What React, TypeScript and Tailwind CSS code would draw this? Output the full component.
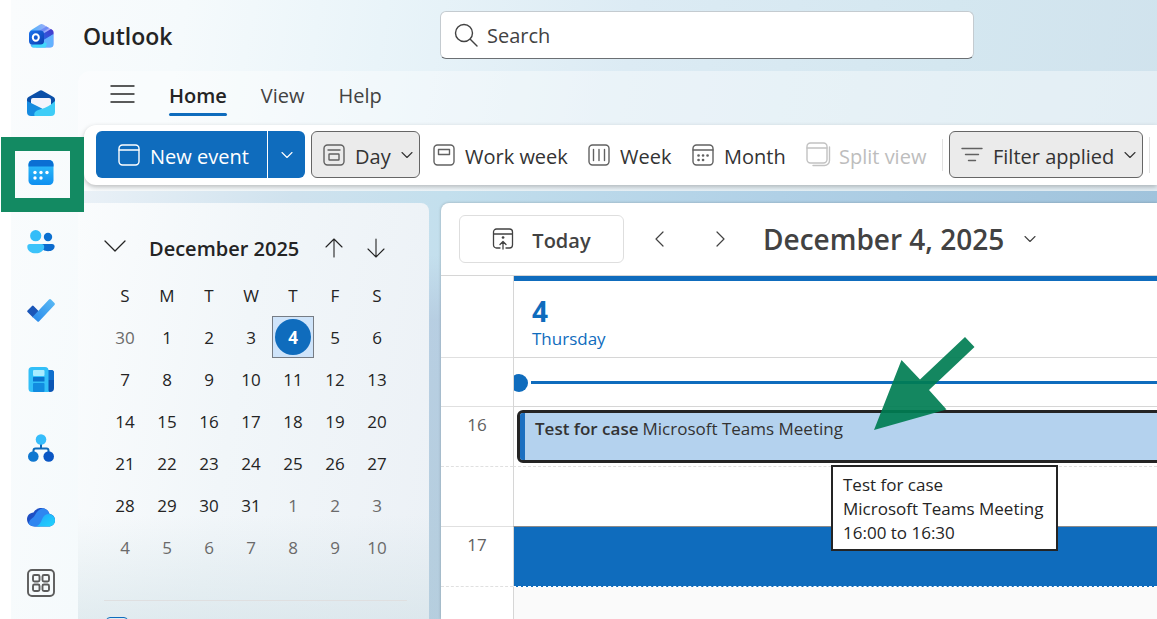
import type { ReactNode } from 'react';

const weekdays = ['S', 'M', 'T', 'W', 'T', 'F', 'S'];

const weeks = [
  [30, 1, 2, 3, 4, 5, 6],
  [7, 8, 9, 10, 11, 12, 13],
  [14, 15, 16, 17, 18, 19, 20],
  [21, 22, 23, 24, 25, 26, 27],
  [28, 29, 30, 31, 1, 2, 3],
  [4, 5, 6, 7, 8, 9, 10],
];

function isOtherMonth(week: number, day: number) {
  return (week === 0 && day > 20) || (week > 3 && day < 20);
}

function Stroke({ children, className = '', size = 24 }: { children: ReactNode; className?: string; size?: number }) {
  return (
    <svg
      width={size}
      height={size}
      viewBox={`0 0 ${size} ${size}`}
      fill="none"
      stroke="currentColor"
      strokeWidth="1.4"
      strokeLinecap="round"
      strokeLinejoin="round"
      className={`shrink-0 ${className}`}
      aria-hidden="true"
    >
      {children}
    </svg>
  );
}

function ChevronDown({ className = '' }: { className?: string }) {
  return (
    <Stroke size={12} className={className}>
      <path d="M1 3.500l5 5 5-5" strokeWidth="1.100" />
    </Stroke>
  );
}

function OutlookLogo() {
  return (
    <svg width="28" height="28" viewBox="0 0 28 28" aria-hidden="true">
      <defs>
        <linearGradient id="olTop" x1="0" y1="0" x2="1" y2="0">
          <stop offset="0" stopColor="#49b4fb" />
          <stop offset="1" stopColor="#c3a8f7" />
        </linearGradient>
        <linearGradient id="olTile" x1="0" y1="0" x2="1" y2="1">
          <stop offset="0" stopColor="#1b74ee" />
          <stop offset="1" stopColor="#0b3db0" />
        </linearGradient>
        <linearGradient id="olFlap" x1="0" y1="1" x2="1" y2="0">
          <stop offset="0" stopColor="#1f6fe8" />
          <stop offset="1" stopColor="#4a35c8" />
        </linearGradient>
      </defs>
      <path d="M3.500 8.500l9.500-6a3 3 0 0 1 3.200 0L25 7.700a3 3 0 0 1 1.500 2.600V22a3.500 3.500 0 0 1-3.500 3.500H7A3.500 3.500 0 0 1 3.500 22z" fill="url(#olTop)" />
      <path d="M10 10l9.500-5.500 2.500 1.500-9 6z" fill="#6f8cf5" />
      <path d="M14 13l10-6 1 .7a3 3 0 0 1 1.500 2.600v2L14 21z" fill="url(#olFlap)" />
      <path d="M14 19.500l12.500-7.500v10a3.500 3.500 0 0 1-3.500 3.500H9z" fill="#62b2ff" />
      <path d="M5 25c1-3 4-4.500 8-4.500h5c1.500 0 2 1 1.500 2.500l-1 2.500H7a3.500 3.500 0 0 1-2-.5z" fill="#42d7fb" />
      <rect x="2" y="8.500" width="15" height="14" rx="3.500" fill="url(#olTile)" />
      <ellipse cx="8.800" cy="15.500" rx="3" ry="3.200" fill="none" stroke="#fff" strokeWidth="2" />
    </svg>
  );
}

function MailIcon() {
  return (
    <svg width="28" height="28" viewBox="0 0 28 28" aria-hidden="true">
      <path d="M0 10.500a3 3 0 0 1 1.500-2.500L12.500 1.700a3 3 0 0 1 3 0l11 6.300A3 3 0 0 1 28 10.500V18H0z" fill="#0a4fa8" />
      <path d="M6 9h16a2 2 0 0 1 2 2v7l-8 4h-4l-8-4v-7a2 2 0 0 1 2-2z" fill="#f4f4fc" />
      <path d="M0 12l15 7.500V27H4a4 4 0 0 1-4-4z" fill="#168be0" />
      <path d="M7.500 27c-1-4 2-5.700 6-6.700 5.500-1.300 10-3.800 14.500-8.300v11a4 4 0 0 1-4 4z" fill="#3fcdf7" />
    </svg>
  );
}

function CalendarIcon() {
  return (
    <svg width="28" height="28" viewBox="0 0 28 28" aria-hidden="true">
      <defs>
        <linearGradient id="calBody" x1="0" y1="0" x2="0" y2="1">
          <stop offset="0" stopColor="#33c4fb" />
          <stop offset="1" stopColor="#0f8ff0" />
        </linearGradient>
      </defs>
      <rect x="1.500" y="2" width="25" height="25" rx="4.500" fill="url(#calBody)" />
      <path d="M1.500 8.500v-2A4.500 4.500 0 0 1 6 2h16a4.500 4.500 0 0 1 4.500 4.500v2z" fill="#0b6fd3" />
      <g fill="#fff">
        <circle cx="8" cy="14.500" r="1.700" />
        <circle cx="14" cy="14.500" r="1.700" />
        <circle cx="20" cy="14.500" r="1.700" />
        <circle cx="8" cy="20" r="1.700" />
        <circle cx="14" cy="20" r="1.700" />
      </g>
    </svg>
  );
}

function PeopleIcon() {
  return (
    <svg width="28" height="28" viewBox="0 0 28 28" aria-hidden="true">
      <circle cx="21" cy="10" r="4.200" fill="#0c70d0" />
      <path d="M14 17h11a2.600 2.600 0 0 1 2.600 2.600c0 3-3 4.700-6.600 4.700s-7-2-7-4.700z" fill="#0b6bce" />
      <circle cx="8.700" cy="8.700" r="5.600" fill="#34bdf8" />
      <path d="M3 17h11.500a2.700 2.700 0 0 1 2.700 2.700c0 4-3.700 6.600-8.500 6.600S.3 23.700.3 19.700A2.700 2.700 0 0 1 3 17z" fill="#3cc3fa" />
    </svg>
  );
}

function TodoIcon() {
  return (
    <svg width="30" height="28" viewBox="0 0 30 28" aria-hidden="true">
      <defs>
        <linearGradient id="todoTick" x1="0" y1="1" x2="1" y2="0">
          <stop offset="0" stopColor="#2687ea" />
          <stop offset="1" stopColor="#5cbcf5" />
        </linearGradient>
      </defs>
      <path d="M1.500 14.500L6 10q.8-.8 1.600 0l5.400 5.500-6 6-5.500-5.500q-.8-.8 0-1.500z" fill="#1a56b8" />
      <path d="M6.500 21L23 3.600q1-1 2 0l3.500 3.500q.9.900 0 1.900L13.200 25.200q-1 1-2 0z" fill="url(#todoTick)" />
    </svg>
  );
}

function NewsIcon() {
  return (
    <svg width="28" height="28" viewBox="0 0 28 28" aria-hidden="true">
      <path d="M19 5h5a3 3 0 0 1 3 3v15a4 4 0 0 1-4 4h-6z" fill="#0a55b4" />
      <path d="M21 5h3a3 3 0 0 1 3 3v7h-6z" fill="#0f6fcd" />
      <path d="M5 2h13a3.500 3.500 0 0 1 3.500 3.500V24a3 3 0 0 0 1 3H5a3.500 3.500 0 0 1-3.500-3.500v-18A3.500 3.500 0 0 1 5 2z" fill="#32bff8" />
      <rect x="6" y="5" width="11.500" height="6" rx="1" fill="#a9ecff" />
      <rect x="6" y="12" width="11.500" height="4.500" rx="0.500" fill="#0a74cf" />
      <rect x="6" y="18" width="11.500" height="9" rx="1" fill="#118be0" />
    </svg>
  );
}

function OrgIcon() {
  return (
    <svg width="28" height="28" viewBox="0 0 28 28" aria-hidden="true">
      <path d="M14 9v6M6.500 19v-2.500a2 2 0 0 1 2-2h11a2 2 0 0 1 2 2V19" fill="none" stroke="#0d69b8" strokeWidth="2" />
      <circle cx="14" cy="5.500" r="5.300" fill="#36bdfb" />
      <circle cx="6.300" cy="22.500" r="5.300" fill="#0f77d0" />
      <circle cx="21.700" cy="22.500" r="5.300" fill="#0a56c4" />
    </svg>
  );
}

function CloudIcon() {
  return (
    <svg width="28" height="28" viewBox="0 0 28 28" aria-hidden="true">
      <defs>
        <linearGradient id="cloudFront" x1="0" y1="0" x2="1" y2="1">
          <stop offset="0" stopColor="#22a5fb" />
          <stop offset="1" stopColor="#20d6fd" />
        </linearGradient>
      </defs>
      <path d="M6.500 9.500C8 6.500 11 5 14.500 5c4 0 7 2.500 8 6 3.500.3 5.500 3 5.500 6.200 0 3.800-2.800 6.300-6.500 6.300H8C3.500 23.500 0 20.700 0 16.300c0-3.800 2.800-6.500 6.500-6.800z" fill="#1e4fc4" />
      <path d="M1.500 20.800C3 15 6 16 8 12c1.800-4 4.500-6 8-6.800 3.500.5 5.700 2.800 6.500 5.800l-10 12.500H8c-3 0-5.200-1-6.500-2.700z" fill="#2f86f0" />
      <path d="M9 23.500c3-1 4.500-3.500 6-7 1.500-3.700 3.500-5.500 7-5.500 3.800.2 6 3 6 6.200 0 3.800-2.800 6.300-6.500 6.300z" fill="url(#cloudFront)" />
    </svg>
  );
}

function AppsIcon() {
  return (
    <svg width="28" height="28" viewBox="0 0 28 28" fill="none" stroke="#5c5c5c" strokeWidth="1.900" aria-hidden="true">
      <rect x="1" y="1" width="26" height="26" rx="4" />
      <rect x="6" y="6" width="6.500" height="6.500" rx="1.500" />
      <rect x="15.500" y="6" width="6.500" height="6.500" rx="1.500" />
      <rect x="6" y="15.500" width="6.500" height="6.500" rx="1.500" />
      <rect x="15.500" y="15.500" width="6.500" height="6.500" rx="1.500" />
    </svg>
  );
}

const railItems = [
  { label: 'People', icon: <PeopleIcon /> },
  { label: 'To Do', icon: <TodoIcon /> },
  { label: 'Newsletters', icon: <NewsIcon /> },
  { label: 'Org Explorer', icon: <OrgIcon /> },
  { label: 'OneDrive', icon: <CloudIcon /> },
];

function Rail() {
  const item = 'flex h-[69px] w-full shrink-0 items-center justify-center';

  return (
    <nav aria-label="Apps" className="flex w-[67px] shrink-0 flex-col items-center pr-2">
      <div className="flex h-[68px] w-full shrink-0 items-center justify-center pt-1">
        <OutlookLogo />
      </div>
      <button aria-label="Mail" className={item}>
        <MailIcon />
      </button>
      <button aria-label="Calendar" className={`${item} relative z-20`}>
        <CalendarIcon />
        <span className="pointer-events-none absolute -left-[10px] top-0 h-[75px] w-[83px] border-[14px] border-[#138a62]" />
      </button>
      {railItems.map((entry) => (
        <button key={entry.label} aria-label={entry.label} className={item}>
          {entry.icon}
        </button>
      ))}
      <button aria-label="More apps" className="flex h-16 w-full shrink-0 items-center justify-center">
        <AppsIcon />
      </button>
    </nav>
  );
}

function Header() {
  return (
    <header className="flex h-[71px] shrink-0 items-center pb-[2px] pl-[5px]">
      <h1 className="w-[357px] shrink-0 pt-1 text-[23px] font-semibold text-[#242424]">Outlook</h1>
      <label className="flex h-12 w-[534px] items-center gap-2 rounded-md border border-[#c4cbd0] border-b-[#6b6f73] bg-white px-3 text-[#424242]">
        <Stroke size={26}>
          <circle cx="11" cy="11" r="8.500" />
          <path d="M17.500 17.500l6.500 6.500" />
        </Stroke>
        <input
          type="search"
          aria-label="Search"
          placeholder="Search"
          className="w-full bg-transparent pt-[2px] text-xl outline-none placeholder:text-[#424242]"
        />
      </label>
    </header>
  );
}

function Tabs() {
  return (
    <div className="flex h-[54px] items-center pb-1 pl-8 text-xl text-[#424242]">
      <button aria-label="Menu" className="mr-[34px] pb-1 text-[#242424]">
        <Stroke size={25}>
          <path d="M1 4h23M1 12h23M1 20h23" />
        </Stroke>
      </button>
      <button className="relative mr-[34px] font-semibold text-[#242424]">
        Home
        <span className="absolute inset-x-0 -bottom-[6px] h-[3px] rounded-full bg-[#0f6cbd]" />
      </button>
      <button className="mr-[34px]">View</button>
      <button>Help</button>
    </div>
  );
}

const frame = <rect x="1" y="1" width="20" height="20" rx="3.500" />;

function Ribbon() {
  return (
    <div className="relative z-10 ml-[6px] flex h-[60px] items-center overflow-hidden rounded-l-xl bg-white pb-px pl-3 text-xl text-[#333] shadow-[0_2px_5px_rgba(0,0,0,0.25)]">
      <div className="mr-[6px] flex h-[47px] shrink-0 overflow-hidden rounded-md bg-[#0f6cbd] text-white">
        <button className="flex w-[171px] items-center gap-[10px] pl-[22px]">
          <Stroke size={22}>
            {frame}
            <path d="M1 6h20" />
          </Stroke>
          <span className="pt-1">New event</span>
        </button>
        <button aria-label="More new items" className="flex w-[38px] items-center justify-center border-l border-white">
          <ChevronDown />
        </button>
      </div>
      <button className="mr-[13px] flex h-[47px] w-[109px] shrink-0 items-center gap-[10px] rounded-md border border-[#666] bg-[#ebebeb] pl-[11px]">
        <Stroke size={22} className="text-[#616161]">
          {frame}
          <path d="M5 6h12" />
          <rect x="6" y="10" width="10" height="6" rx="0.500" />
        </Stroke>
        <span className="pt-1">Day</span>
        <ChevronDown />
      </button>
      <button className="flex w-[155px] shrink-0 items-center gap-[10px] whitespace-nowrap">
        <Stroke size={22} className="text-[#616161]">
          {frame}
          <path d="M5.500 5.500h11v5h-11z" />
        </Stroke>
        <span className="pt-1">Work week</span>
      </button>
      <button className="flex w-[104px] shrink-0 items-center gap-[10px]">
        <Stroke size={22} className="text-[#616161]">
          {frame}
          <path d="M5.500 5.500v11M11 5.500v11M16.500 5.500v11" />
        </Stroke>
        <span className="pt-1">Week</span>
      </button>
      <button className="flex w-[114px] shrink-0 items-center gap-[10px]">
        <Stroke size={22} className="text-[#616161]">
          {frame}
          <path d="M1 6h20" />
          <path d="M6.500 11.500h.1M11 11.500h.1M15.500 11.500h.1M6.500 16h.1M11 16h.1" strokeWidth="2.600" />
        </Stroke>
        <span className="pt-1">Month</span>
      </button>
      <button disabled className="flex w-[137px] shrink-0 items-center gap-2 whitespace-nowrap border-r border-[#e0e0e0] text-[#bdbdbd]">
        <Stroke size={25} className="text-[#c2c2c2]">
          {frame}
          <path d="M1 6h20M23.500 5v13.500a5 5 0 0 1-5 5H7" />
        </Stroke>
        <span className="pt-1">Split view</span>
      </button>
      <button className="ml-[6px] flex h-[47px] w-[194px] shrink-0 items-center gap-[10px] whitespace-nowrap rounded-md border border-[#666] bg-[#ebebeb] pl-[11px]">
        <Stroke size={22} className="text-[#616161]">
          <path d="M1 4.500h20M4.500 10.500h13M7.500 16.500h7" />
        </Stroke>
        <span className="pt-1">Filter applied</span>
        <ChevronDown />
      </button>
      <span className="ml-[6px] h-9 border-l border-[#e0e0e0]" />
    </div>
  );
}

function MonthPicker() {
  return (
    <aside className="w-[351px] shrink-0 overflow-hidden rounded-tr-lg bg-[linear-gradient(180deg,transparent_75%,rgba(205,222,228,0.5)_100%),linear-gradient(100deg,#fafcfd_0%,#f1f6f9_45%,#ecf1f6_100%)] pl-[26px] pr-[22px] pt-[25px] text-[#242424]">
      <div className="flex h-10 items-center">
        <button aria-label="Collapse calendar" className="mr-[23px] pb-1">
          <Stroke size={22}>
            <path d="M1 6l10 10L21 6" strokeWidth="1.300" />
          </Stroke>
        </button>
        <h2 className="mr-auto whitespace-nowrap pt-[2px] text-xl font-semibold">December 2025</h2>
        <button aria-label="Previous month" className="mr-5">
          <Stroke size={22}>
            <path d="M11 2v18M3 10l8-8 8 8" strokeWidth="1.100" />
          </Stroke>
        </button>
        <button aria-label="Next month" className="mr-5">
          <Stroke size={22}>
            <path d="M11 2v18M3 12l8 8 8-8" strokeWidth="1.100" />
          </Stroke>
        </button>
      </div>
      <table className="mt-[6px] w-[294px] table-fixed border-collapse text-center text-[17px]">
        <thead>
          <tr>
            {weekdays.map((day, i) => (
              <th key={i} className="h-[42px] p-0 pt-[2px] font-normal">
                {day}
              </th>
            ))}
          </tr>
        </thead>
        <tbody>
          {weeks.map((week, w) => (
            <tr key={w}>
              {week.map((day) => (
                <td key={day} className={`h-[42px] p-0 ${isOtherMonth(w, day) ? 'text-[#6a6a6a]' : ''}`}>
                  {w === 0 && day === 4 ? (
                    <button className="flex h-[42px] w-[42px] items-center justify-center border border-[#767c84] bg-[#cfe4fa]">
                      <span className="flex h-9 w-9 items-center justify-center rounded-full bg-[#0f6cbd] pt-[2px] font-bold text-white">4</span>
                    </button>
                  ) : (
                    <button className="h-[42px] w-full pt-[2px]">{day}</button>
                  )}
                </td>
              ))}
            </tr>
          ))}
        </tbody>
      </table>
      <hr className="mt-8 border-[#dfdfe0]" />
      <input type="checkbox" aria-label="Calendar" className="ml-[2px] mt-4 block h-[22px] w-[22px] appearance-none rounded border border-[#0f6cbd]" />
    </aside>
  );
}

function DayToolbar() {
  return (
    <div className="flex h-[72px] items-center pl-[18px] text-[#424242]">
      <button className="flex h-12 w-[165px] items-center justify-center gap-[18px] rounded-md border border-[#dedede] text-xl font-semibold">
        <Stroke size={22}>
          <path d="M8 20H4.500A3 3 0 0 1 1.500 17V4a3 3 0 0 1 3-3h13a3 3 0 0 1 3 3v13a3 3 0 0 1-3 3H14M1.500 6h19M11 21v-7M8 16.500l3-3 3 3" strokeWidth="1.300" />
          <path d="M11 9.500h.1" strokeWidth="2.600" />
        </Stroke>
        <span className="pt-1">Today</span>
      </button>
      <button aria-label="Previous day" className="ml-[26px]">
        <Stroke size={18}>
          <path d="M13 2L6 9l7 7" strokeWidth="1.200" />
        </Stroke>
      </button>
      <button aria-label="Next day" className="ml-[43px]">
        <Stroke size={18}>
          <path d="M6 2l7 7-7 7" strokeWidth="1.200" />
        </Stroke>
      </button>
      <button className="ml-[34px] flex items-center gap-5 whitespace-nowrap text-[28px] font-semibold">
        December 4, 2025
        <ChevronDown />
      </button>
    </div>
  );
}

function Event() {
  return (
    <div className="absolute -right-2 left-[3px] top-[3px] h-[53px]">
      <button className="flex h-full w-full overflow-hidden rounded-md border-[3px] border-[#242424] bg-[#b4d2ee] text-left text-[17px] text-[#333]">
        <span className="h-full w-[5px] shrink-0 bg-[#1b6fc0]" />
        <span className="ml-[10px] mt-1 flex gap-1 leading-6">
          <span className="font-semibold">Test for case</span>
          <span>Microsoft Teams Meeting</span>
        </span>
      </button>
      <div role="tooltip" className="absolute left-[314px] top-[55px] z-10 w-[227px] whitespace-nowrap border-2 border-[#242424] bg-white px-[10px] pb-1 pt-[6px] text-[17px] leading-6 text-[#242424]">
        <p>Test for case</p>
        <p>Microsoft Teams Meeting</p>
        <p>16:00 to 16:30</p>
      </div>
      <svg width="102" height="94" viewBox="0 0 102 94" className="pointer-events-none absolute -top-[73px] left-[357px] z-10" aria-hidden="true">
        <path d="M91 0l9.500 10L55 53l17.500 19.500L0 93 27.500 23 46 42.500z" fill="#007d52" fillOpacity="0.920" />
      </svg>
    </div>
  );
}

function DayView() {
  return (
    <main className="min-w-0 flex-1 overflow-hidden rounded-tl-lg bg-white shadow-[0_0_3px_rgba(0,0,0,0.25)]">
      <DayToolbar />
      <div className="grid grid-cols-[72px_1fr] border-t border-[#d6d6d6]">
        <div className="border-b border-[#e0e0e0]" />
        <div className="h-[82px] border-b border-l border-[#d6d6d6] bg-white">
          <div className="h-[5px] bg-[#0f6cbd]" />
          <div className="pl-[18px] text-[#0f6cbd]">
            <p className="mt-3 text-[28px] font-bold leading-9">4</p>
            <p className="text-[17px] leading-5">Thursday</p>
          </div>
        </div>

        <div className="border-b border-[#e0e0e0]" />
        <div className="relative h-[49px] overflow-hidden border-b border-l border-[#d6d6d6]">
          <span className="absolute -left-1 top-4 h-[18px] w-[18px] rounded-full bg-[#0f6cbd]" />
          <span className="absolute left-[17px] right-0 top-[23px] h-[3px] bg-[#0f6cbd]" />
        </div>

        <div className="border-b border-dashed border-[#e0e0e0] pt-[5px] text-center text-[17px] text-[#616161]">16</div>
        <div className="relative h-[60px] border-b border-l border-dashed border-[#e0e0e0] [border-left-color:#d6d6d6] [border-left-style:solid]">
          <Event />
        </div>

        <div className="border-b border-[#e0e0e0]" />
        <div className="h-[60px] border-b border-l border-[#d6d6d6] [border-bottom-color:#8a8a8a]" />

        <div className="border-b border-dashed border-[#e0e0e0] pt-[5px] text-center text-[17px] text-[#616161]">17</div>
        <div className="h-[60px] border-b border-l border-dashed border-white bg-[#0f6cbd] [border-left-color:#d6d6d6] [border-left-style:solid]" />

        <div />
        <div className="h-[60px] border-l border-[#d6d6d6] bg-[#fafafa]" />
      </div>
    </main>
  );
}

export default function App() {
  return (
    <div className="h-screen overflow-hidden bg-white pl-[11px] font-['Open_Sans','Noto_Sans',sans-serif]">
      <div className="flex h-full bg-[linear-gradient(100deg,#fafcfd_0%,#f5fafc_14%,#e9f4f9_30%,#dcebf4_50%,#d4e7f0_75%,#cfe1ec_100%)]">
        <Rail />
        <div className="flex min-w-0 flex-1 flex-col">
          <Header />
          <div className="h-[120px] shrink-0 overflow-hidden rounded-tl-xl bg-white/40">
            <Tabs />
            <Ribbon />
          </div>
          <div className="flex min-h-0 flex-1 gap-3 bg-[linear-gradient(180deg,transparent_0%,transparent_15%,rgba(160,175,205,0.35)_30%,rgba(160,180,200,0.4)_100%),linear-gradient(90deg,#eaf1f7_0%,#cfe2ee_20%,#c3dfed_34%,#b0d0e6_65%,#a0c3dc_100%)] pt-3">
            <MonthPicker />
            <DayView />
          </div>
        </div>
      </div>
    </div>
  );
}
